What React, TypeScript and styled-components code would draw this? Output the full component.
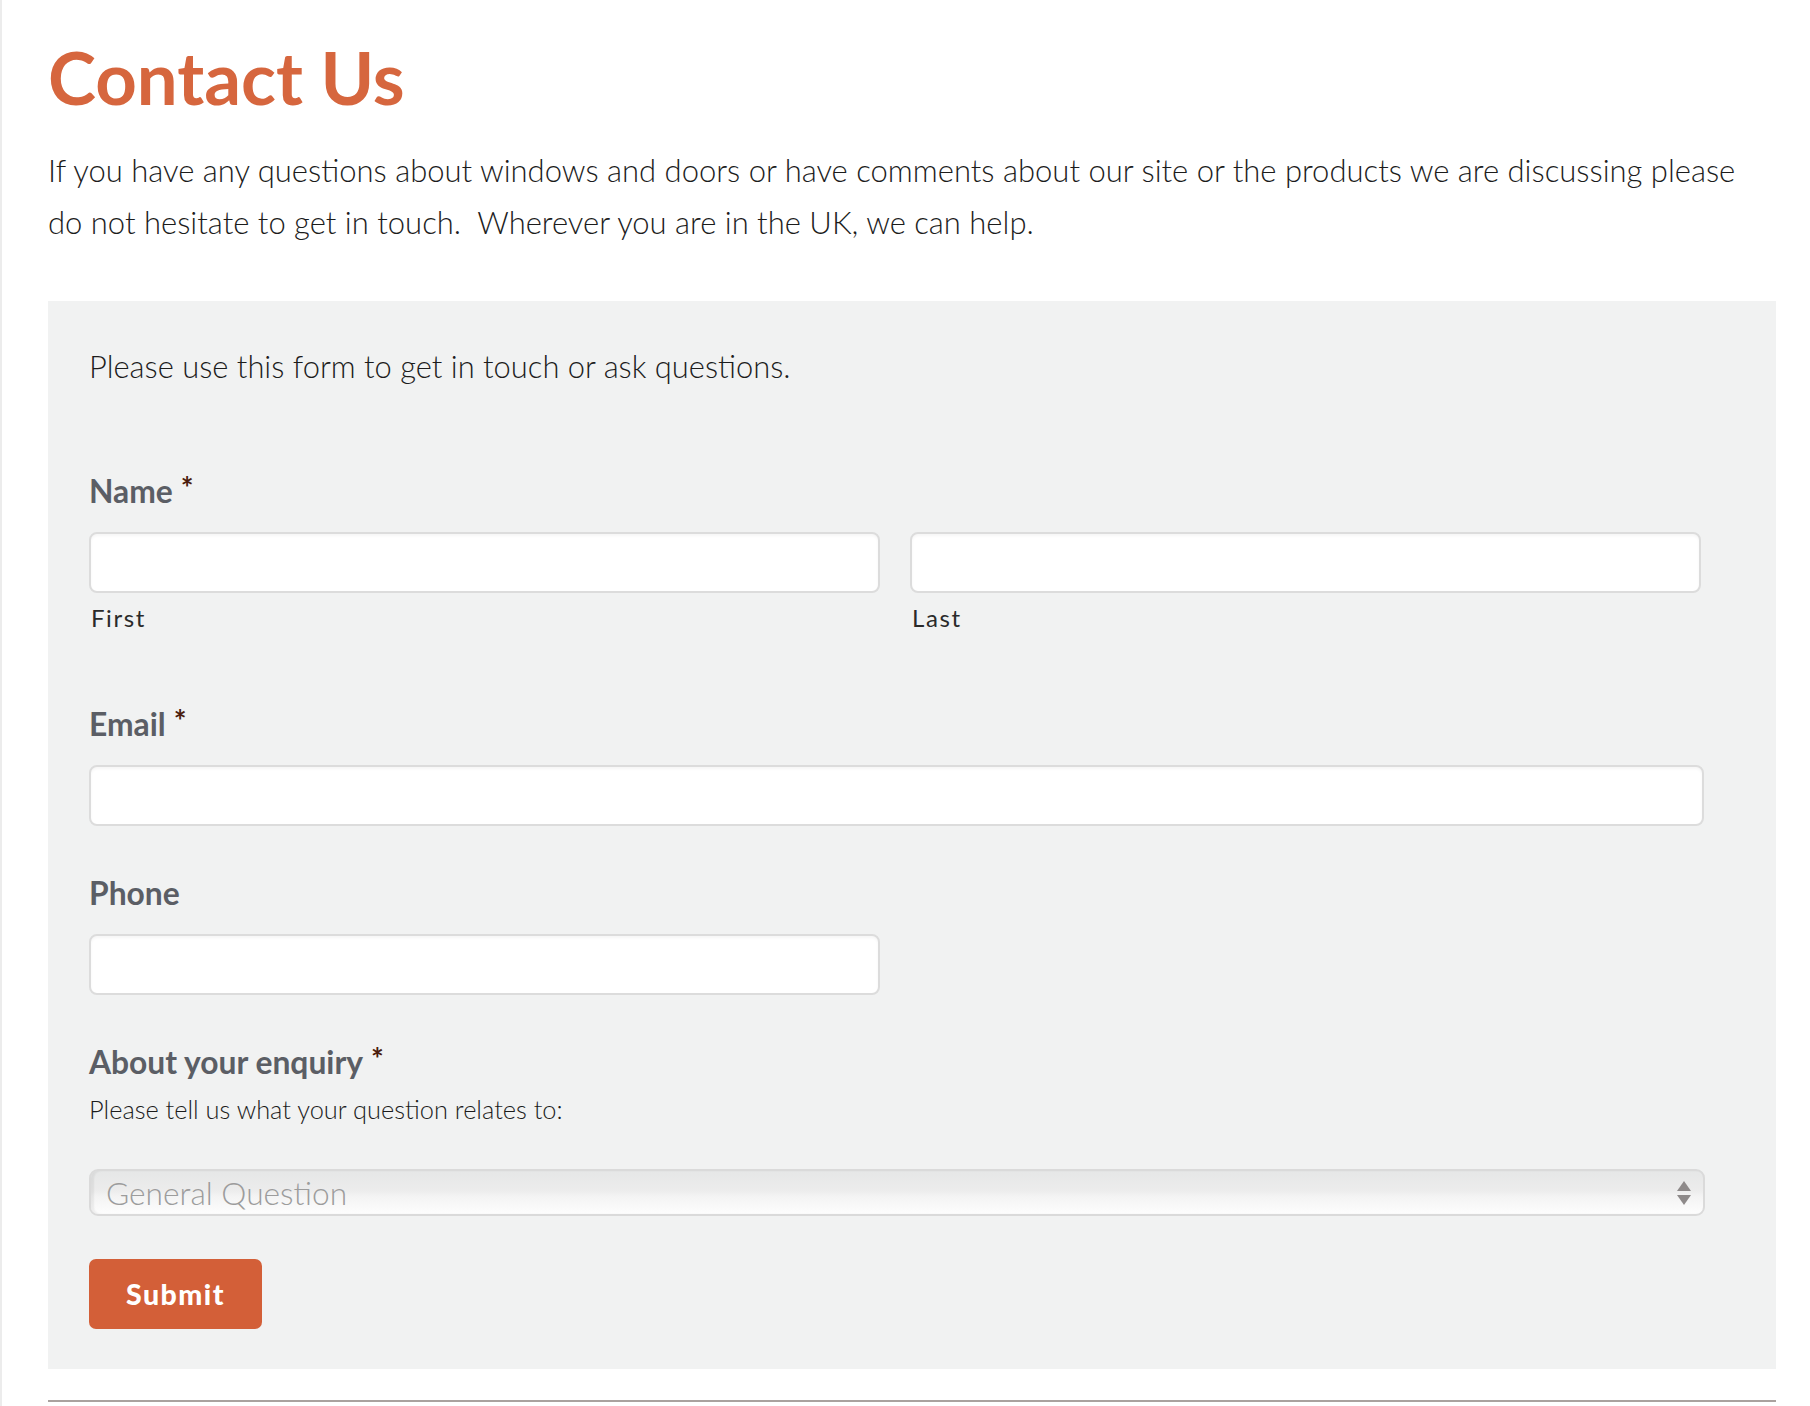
import styled, { createGlobalStyle } from 'styled-components'

const GlobalStyle = createGlobalStyle`
  html, body {
    margin: 0;
    padding: 0;
    background: #fff;
  }
  * {
    box-sizing: border-box;
  }
`

const Page = styled.div`
  min-height: 1406px;
  border-left: 2px solid #ececec;
  padding: 33px 34px 0 46px;
  font-family: Lato, "Open Sans", sans-serif;
  color: #1c1c1c;
`

const Title = styled.h1`
  margin: 0;
  font-size: 72.5px;
  line-height: 1.2;
  font-weight: 700;
  color: #d6663e;
`

const Intro = styled.p`
  margin: 24px 0 0;
  font-size: 31px;
  font-weight: 300;
  line-height: 52px;
`

const FormBox = styled.form`
  margin-top: 53px;
  padding: 41px 41px 40px;
  background: #f1f2f2;
`

const Lead = styled.p`
  margin: 0;
  font-size: 30.9px;
  font-weight: 300;
  line-height: 50px;
`

const Field = styled.div<{ $gap: number }>`
  margin-top: ${p => p.$gap}px;
  width: 1615px;
`

const Label = styled.div`
  font-size: 31.8px;
  font-weight: 700;
  line-height: 1.2;
  color: #5b5e65;
`

const Required = styled.span`
  color: #4a1c0c;
  font-size: 30px;
  font-weight: 700;
  vertical-align: top;
  line-height: 1;
  margin-left: 8px;
`

const Help = styled.div`
  margin-top: 9px;
  font-size: 25.4px;
  font-weight: 300;
  line-height: 39px;
`

const Row = styled.div<{ $cols: number }>`
  display: grid;
  grid-template-columns: repeat(${p => p.$cols}, 789px);
  column-gap: 32px;
  margin-top: 22px;
`

const Column = styled.div`
  display: flex;
  flex-direction: column;
`

const TextInput = styled.input<{ $wide?: boolean }>`
  display: block;
  width: ${p => (p.$wide ? '1615px' : '791px')};
  height: 61px;
  margin: 0;
  border: 2px solid #dcdcdc;
  border-radius: 8px;
  background: #fff;
  box-shadow: inset 0 2px 3px rgba(0, 0, 0, 0.04);
  font: 300 26px Lato, sans-serif;
  padding: 0 14px;
  outline: none;
`

const SubLabel = styled.span`
  margin-top: 11px;
  padding-left: 2px;
  font-size: 24px;
  line-height: 1.2;
  letter-spacing: 1.6px;
  color: #2a2a2a;
`

const SelectBox = styled.div`
  position: relative;
  margin-top: 40px;
  width: 1616px;
  height: 47px;
  border: 2px solid #dadada;
  border-radius: 9px;
  background: linear-gradient(#e6e7e7 0%, #ececec 45%, #f4f4f4 60%, #fdfdfd 100%);
  box-shadow: inset 3px 0 2px rgba(0, 0, 0, 0.06);
  display: flex;
  align-items: center;
  padding-left: 15px;
  font-size: 31.7px;
  font-weight: 300;
  color: #9c9c9c;
`

const Arrows = styled.svg`
  position: absolute;
  right: 11px;
  top: 9px;
`

const SubmitButton = styled.button`
  margin-top: 43px;
  display: block;
  width: 173px;
  height: 70px;
  border: none;
  border-radius: 7px;
  background: #d35f38;
  color: #fff;
  font-family: Lato, sans-serif;
  font-size: 28.5px;
  font-weight: 900;
  letter-spacing: 1.5px;
  padding: 0;
`

const Rule = styled.hr`
  margin: 31px 0 0;
  border: none;
  border-top: 2px solid #aaa29f;
`

const App = () => {
  return (
    <Page>
      <GlobalStyle />
      <Title>Contact Us</Title>
      <Intro>
        If you have any questions about windows and doors or have comments about our site or the products we are discussing please do not hesitate to get in touch.&nbsp; Wherever you are in the UK, we can help.
      </Intro>
      <FormBox onSubmit={e => e.preventDefault()}>
        <Lead>Please use this form to get in touch or ask questions.</Lead>

        <Field $gap={80}>
          <Label>Name<Required>*</Required></Label>
          <Row $cols={2}>
            <Column>
              <TextInput type="text" />
              <SubLabel>First</SubLabel>
            </Column>
            <Column>
              <TextInput type="text" />
              <SubLabel>Last</SubLabel>
            </Column>
          </Row>
        </Field>

        <Field $gap={72}>
          <Label>Email<Required>*</Required></Label>
          <Row $cols={1}>
            <TextInput type="email" $wide />
          </Row>
        </Field>

        <Field $gap={48}>
          <Label>Phone</Label>
          <Row $cols={1}>
            <TextInput type="tel" />
          </Row>
        </Field>

        <Field $gap={48}>
          <Label>About your enquiry<Required>*</Required></Label>
          <Help>Please tell us what your question relates to:</Help>
          <SelectBox>
            General Question
            <Arrows width="16" height="26" viewBox="0 0 16 26">
              <polygon points="8,1 15,11 1,11" fill="#8e8a8a" />
              <polygon points="1,15 15,15 8,25" fill="#8e8a8a" />
            </Arrows>
          </SelectBox>
        </Field>

        <SubmitButton type="submit">Submit</SubmitButton>
      </FormBox>
      <Rule />
    </Page>
  )
}

export default App
